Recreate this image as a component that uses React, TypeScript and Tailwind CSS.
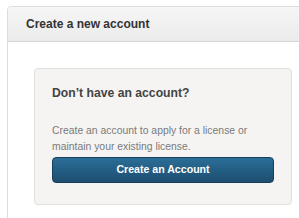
export default function App() {
  return (
    <div className="w-[299px] h-[218px] overflow-hidden bg-white pl-[7px] pt-[6px]" style={{ fontFamily: '"Liberation Sans", Arial, sans-serif' }}>
      <div className="w-[310px] h-[230px] border border-[#dcdcdc] rounded-tl-[4px] bg-white">
        <div className="h-[35px] border-b border-[#d6d6d6] bg-gradient-to-b from-[#f6f6f6] to-[#ebebeb] pl-[18px] flex items-center rounded-tl-[4px]">
          <span className="text-[12px] font-bold text-[#333]">Create a new account</span>
        </div>
        <div className="pl-[26px] pt-[26px]">
          <div className="w-[258px] h-[137px] border border-[#e2e0dd] rounded-[4px] bg-[#f5f4f2] px-[17px] pt-[16px]">
            <h2 className="text-[12.2px] leading-[16px] font-bold text-[#444]">Don’t have an account?</h2>
            <p className="mt-[22px] text-[10.4px] leading-[16px] text-[#7a7a7a]">
              Create an account to apply for a license or maintain your existing license.
            </p>
            <button className="mt-[2px] w-[222px] h-[26px] rounded-[4px] border border-[#173f5d] bg-gradient-to-b from-[#2b6e97] to-[#1d4e70] text-white text-[10.6px] font-bold flex items-center justify-center">
              Create an Account
            </button>
          </div>
        </div>
      </div>
    </div>
  );
}
